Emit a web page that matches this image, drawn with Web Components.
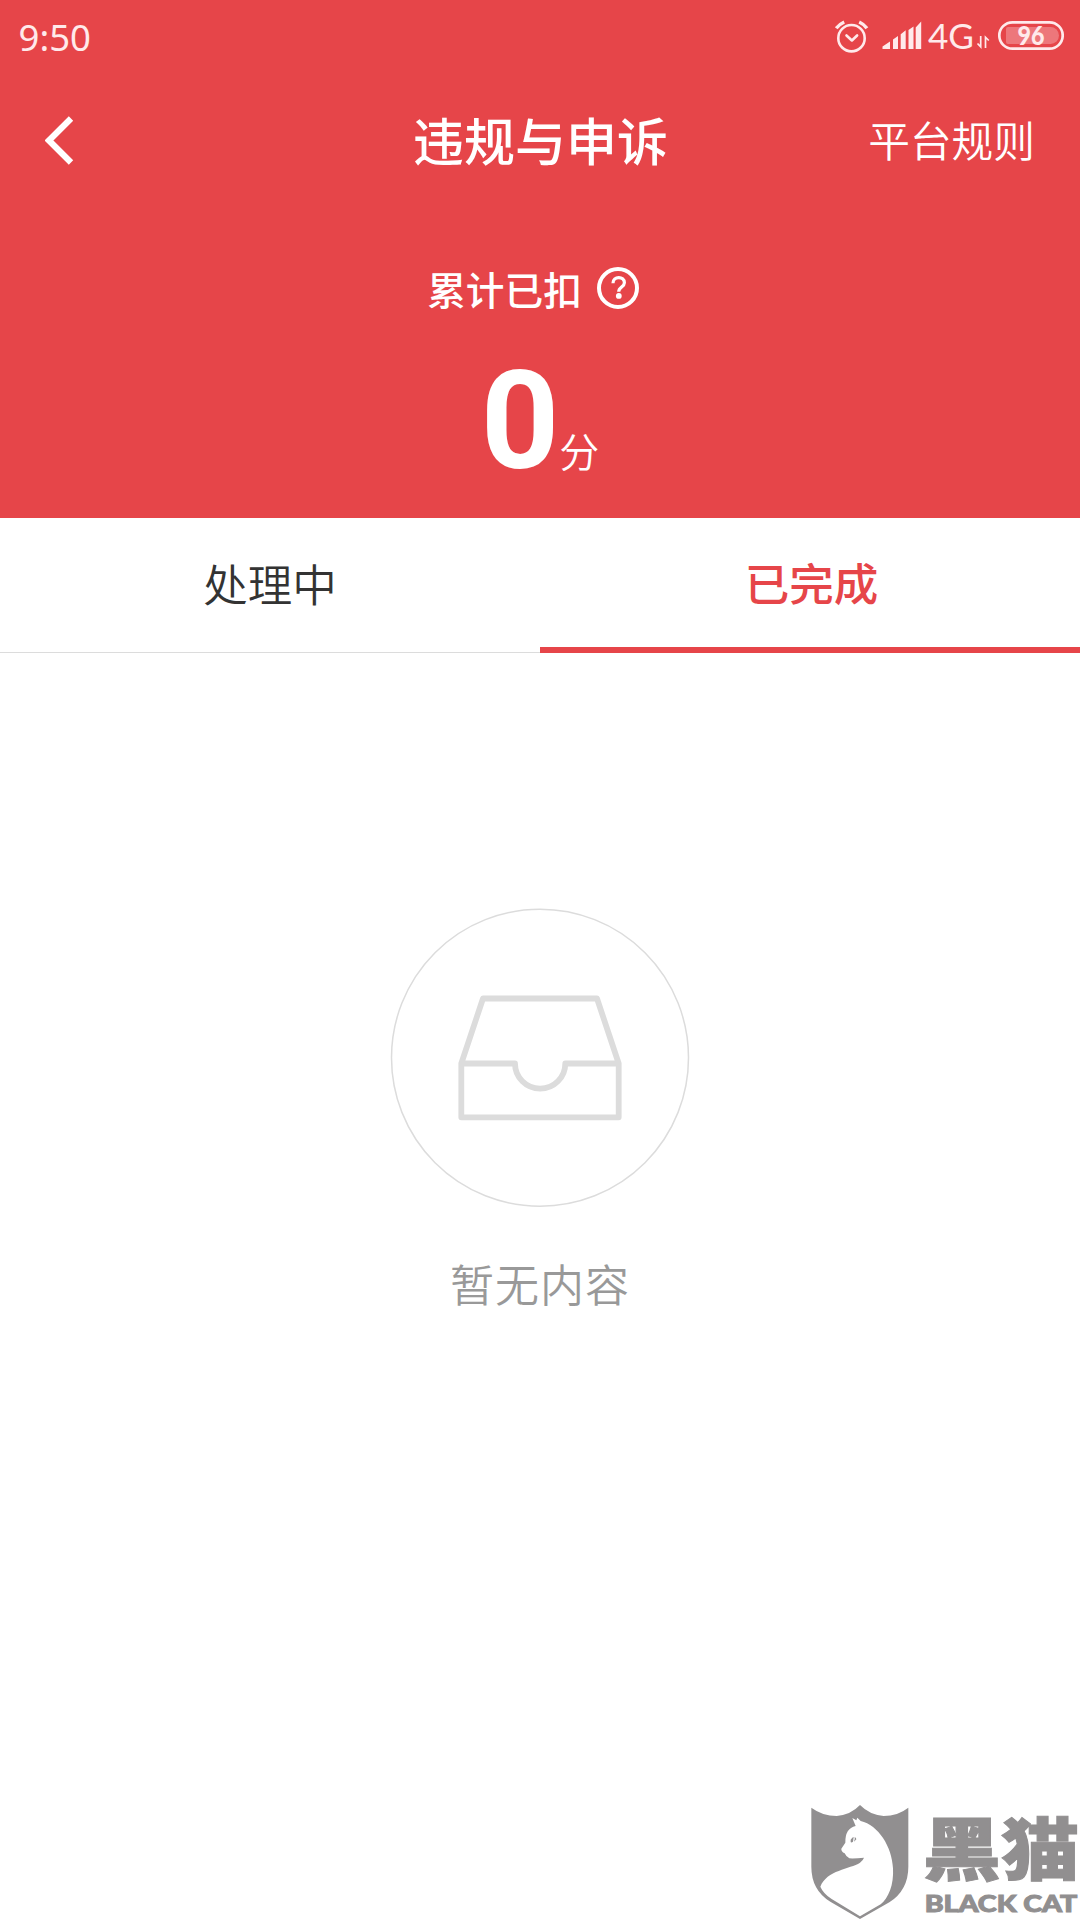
<!DOCTYPE html>
<html lang="zh-CN">
<head>
<meta charset="utf-8">
<title>违规与申诉</title>
<style>
body {
    margin: 0;
    font-family: "Noto Sans CJK SC", sans-serif;
    background: #fff;
}
</style>
</head>
<body>
<violation-page></violation-page>

<script>
function define(name, html) {
    const template = document.createElement("template");
    template.innerHTML = html;
    customElements.define(name, class extends HTMLElement {
        constructor() {
            super();
            this.attachShadow({ mode: "open" });
            this.shadowRoot.appendChild(template.content.cloneNode(true));
        }
    });
}

define("status-bar", `
    <style>
    :host {
        display: flex;
        align-items: center;
        justify-content: space-between;
        height: 74px;
        padding: 0 16px 0 18.5px;
        color: #ffeaeb;
        box-sizing: border-box;
    }
    .time {
        font: 36.5px/74px "Noto Sans", sans-serif;
    }
    svg {
        display: block;
        font-family: Lato, sans-serif;
    }
    </style>
    <span class="time">9:50</span>
    <svg width="232" height="74" viewBox="832 0 232 74" fill="none" stroke="currentColor">
        <circle cx="851.5" cy="38.2" r="13.2" stroke-width="2.6"/>
        <path d="M846.5 35.500l5.400 5 5.200-5" stroke-width="2.6" stroke-linecap="round" stroke-linejoin="round"/>
        <path d="M836.2 28.300q3-4 8-6.300M859.200 22q5 2.300 7.700 6.300" stroke-width="3.4"/>
        <path d="M882.5 49v-2.500l7.500-5v7.500zM893 49v-9.500l5-3.500v13zM900.700 49v-14.700l5-4v18.700zM908.500 49v-19l5-3.500v22.500zM915.700 49v-21.500l5.500-6v27.500z" fill="currentColor" stroke="none"/>
        <text x="928" y="48.5" font-size="34" font-weight="400" fill="currentColor" stroke="none" textLength="46" lengthAdjust="spacingAndGlyphs">4G</text>
        <path d="M977.5 43.500l3.200 3.300v-10.800M985.500 48v-10.800l3.300 3.300" stroke-width="1.7"/>
        <path d="M1008 27h42.500a8.500 8.500 0 0 1 0 17h-42.500q-2 0-2-2v-13q0-2 2-2z" fill="#ed777b" stroke="none"/>
        <rect x="999.3" y="22.3" width="63.4" height="26.4" rx="13.2" stroke-width="2.7"/>
        <text x="1017.5" y="45" font-size="26.5" font-weight="900" fill="currentColor" stroke="none" textLength="27" lengthAdjust="spacingAndGlyphs">96</text>
    </svg>
`);

define("nav-bar", `
    <style>
    :host {
        display: grid;
        grid-template-columns: 1fr auto 1fr;
        align-items: center;
        height: 134px;
        padding: 0 45px;
        color: #fff;
    }
    svg {
        display: block;
    }
    .title {
        padding: 0 0 5px 1px;
        font-size: 51px;
        line-height: 60px;
        font-weight: 500;
    }
    .action {
        justify-self: end;
        padding-bottom: 4px;
        font-size: 41.7px;
        line-height: 60px;
        font-weight: 350;
    }
    </style>
    <svg width="30" height="50" viewBox="0 0 30 50" fill="none" stroke="#fff" stroke-width="6.2">
        <path d="M26 2.500L4 24.500l22 22"/>
    </svg>
    <span class="title"><slot></slot></span>
    <span class="action"><slot name="action"></slot></span>
`);

define("score-panel", `
    <style>
    :host {
        display: flex;
        flex-direction: column;
        align-items: center;
        height: 310px;
        color: #fff;
    }
    .label {
        display: flex;
        align-items: center;
        gap: 15px;
        height: 60px;
        margin-top: 50px;
        padding-right: 14px;
        font-size: 38.7px;
        line-height: 60px;
        font-weight: 500;
    }
    svg {
        display: block;
    }
    .score {
        display: flex;
        align-items: baseline;
        margin-top: 23px;
        line-height: 160px;
    }
    .value {
        font: bold 137px/160px Roboto, sans-serif;
    }
    .unit {
        font-size: 40px;
        font-weight: 350;
        line-height: 60px;
        position: relative;
        top: -1px;
    }
    </style>
    <div class="label">
        <slot></slot>
        <svg width="42" height="42" viewBox="0 0 42 42" fill="none" stroke="#fff">
            <circle cx="21" cy="21" r="19" stroke-width="4"/>
            <path d="M16 16.200c0-7.400 11.400-7.400 11.400-.5 0 4.400-5.700 4.200-5.700 9" stroke-width="3.2"/>
            <circle cx="21.800" cy="28.9" r="2.9" fill="#fff" stroke="none"/>
        </svg>
    </div>
    <div class="score">
        <span class="value"><slot name="value"></slot></span>
        <span class="unit">分</span>
    </div>
`);

define("tab-item", `
    <style>
    :host {
        flex: none;
        width: 50%;
        height: 135px;
        box-sizing: border-box;
        border-bottom: 1px solid #dcdcdc;
        text-align: center;
        font-size: 44.5px;
        line-height: 130px;
        font-weight: 350;
        color: #333;
    }
    :host([active]) {
        padding-left: 3px;
        border-bottom: 6px solid #e64549;
        color: #e64549;
        font-weight: 500;
        line-height: 128px;
    }
    </style>
    <slot></slot>
`);

define("tab-bar", `
    <style>
    :host {
        display: flex;
    }
    </style>
    <slot></slot>
`);

define("empty-state", `
    <style>
    :host {
        display: flex;
        flex-direction: column;
        align-items: center;
        padding-top: 255px;
        color: #999;
        font-size: 44px;
        line-height: 60px;
        font-weight: 350;
        letter-spacing: 1px;
    }
    svg {
        display: block;
        margin-bottom: 45px;
    }
    </style>
    <svg width="300" height="300" viewBox="390 908 300 300" fill="none" stroke="#dcdcdc">
        <circle cx="540" cy="1057.7" r="148.5" stroke-width="1.5"/>
        <path d="M461.300 1063.500L483 998.500h114l21.700 65v53.800H461.300zM461.300 1063.500H515a25.100 25.100 0 0 0 50.300 0h53.400" stroke-width="5.8" stroke-linejoin="round"/>
    </svg>
    <slot></slot>
`);

define("black-cat-mark", `
    <style>
    :host {
        display: block;
        width: 280px;
        height: 130px;
        color: #918f90;
    }
    svg {
        display: block;
    }
    </style>
    <svg width="280" height="130" viewBox="0 0 840 390" fill="currentColor">
        <path d="M34 53Q68 78 110 78Q153 74 180 45Q208 74 251 78Q293 78 325 53V230Q325 300 268 337L180 387L91 335Q34 300 34 230Z"/>
        <path d="M157 84L169 91L172 83L182 93C235 105 276 170 279 235C282 285 265 325 242 343L180 379L95 327Q70 311 61 290C80 240 150 237 180 218Q190 210 192 203Q165 206 148 205Q137 198 134 190Q123 184 124 176L136 158Q135 115 167 108Z" fill="#fff"/>
        <path d="M152 149q5-7 9-8l-2 14q-5 4-7 1zM164 141q5 3 5 7l-7 7q4-7 2-14z"/>
        <text x="368" y="255" font-family="'Noto Sans CJK SC', sans-serif" font-size="206" font-weight="900" stroke="currentColor" stroke-width="3" textLength="470" lengthAdjust="spacingAndGlyphs">黑猫</text>
        <text x="374" y="367" font-family="Lato, sans-serif" font-size="68" font-weight="900" stroke="currentColor" stroke-width="3" textLength="458" lengthAdjust="spacingAndGlyphs">BLACK CAT</text>
    </svg>
`);

define("violation-page", `
    <style>
    :host {
        display: flex;
        flex-direction: column;
        width: 1080px;
        height: 1920px;
        overflow: hidden;
        background: #fff;
    }
    header {
        background: #e64549;
    }
    black-cat-mark {
        margin: auto 0 0 auto;
    }
    </style>
    <header>
        <status-bar></status-bar>
        <nav-bar>违规与申诉<span slot="action">平台规则</span></nav-bar>
        <score-panel>累计已扣<span slot="value">0</span></score-panel>
    </header>
    <tab-bar>
        <tab-item>处理中</tab-item>
        <tab-item active>已完成</tab-item>
    </tab-bar>
    <empty-state>暂无内容</empty-state>
    <black-cat-mark></black-cat-mark>
`);
</script>
</body>
</html>
